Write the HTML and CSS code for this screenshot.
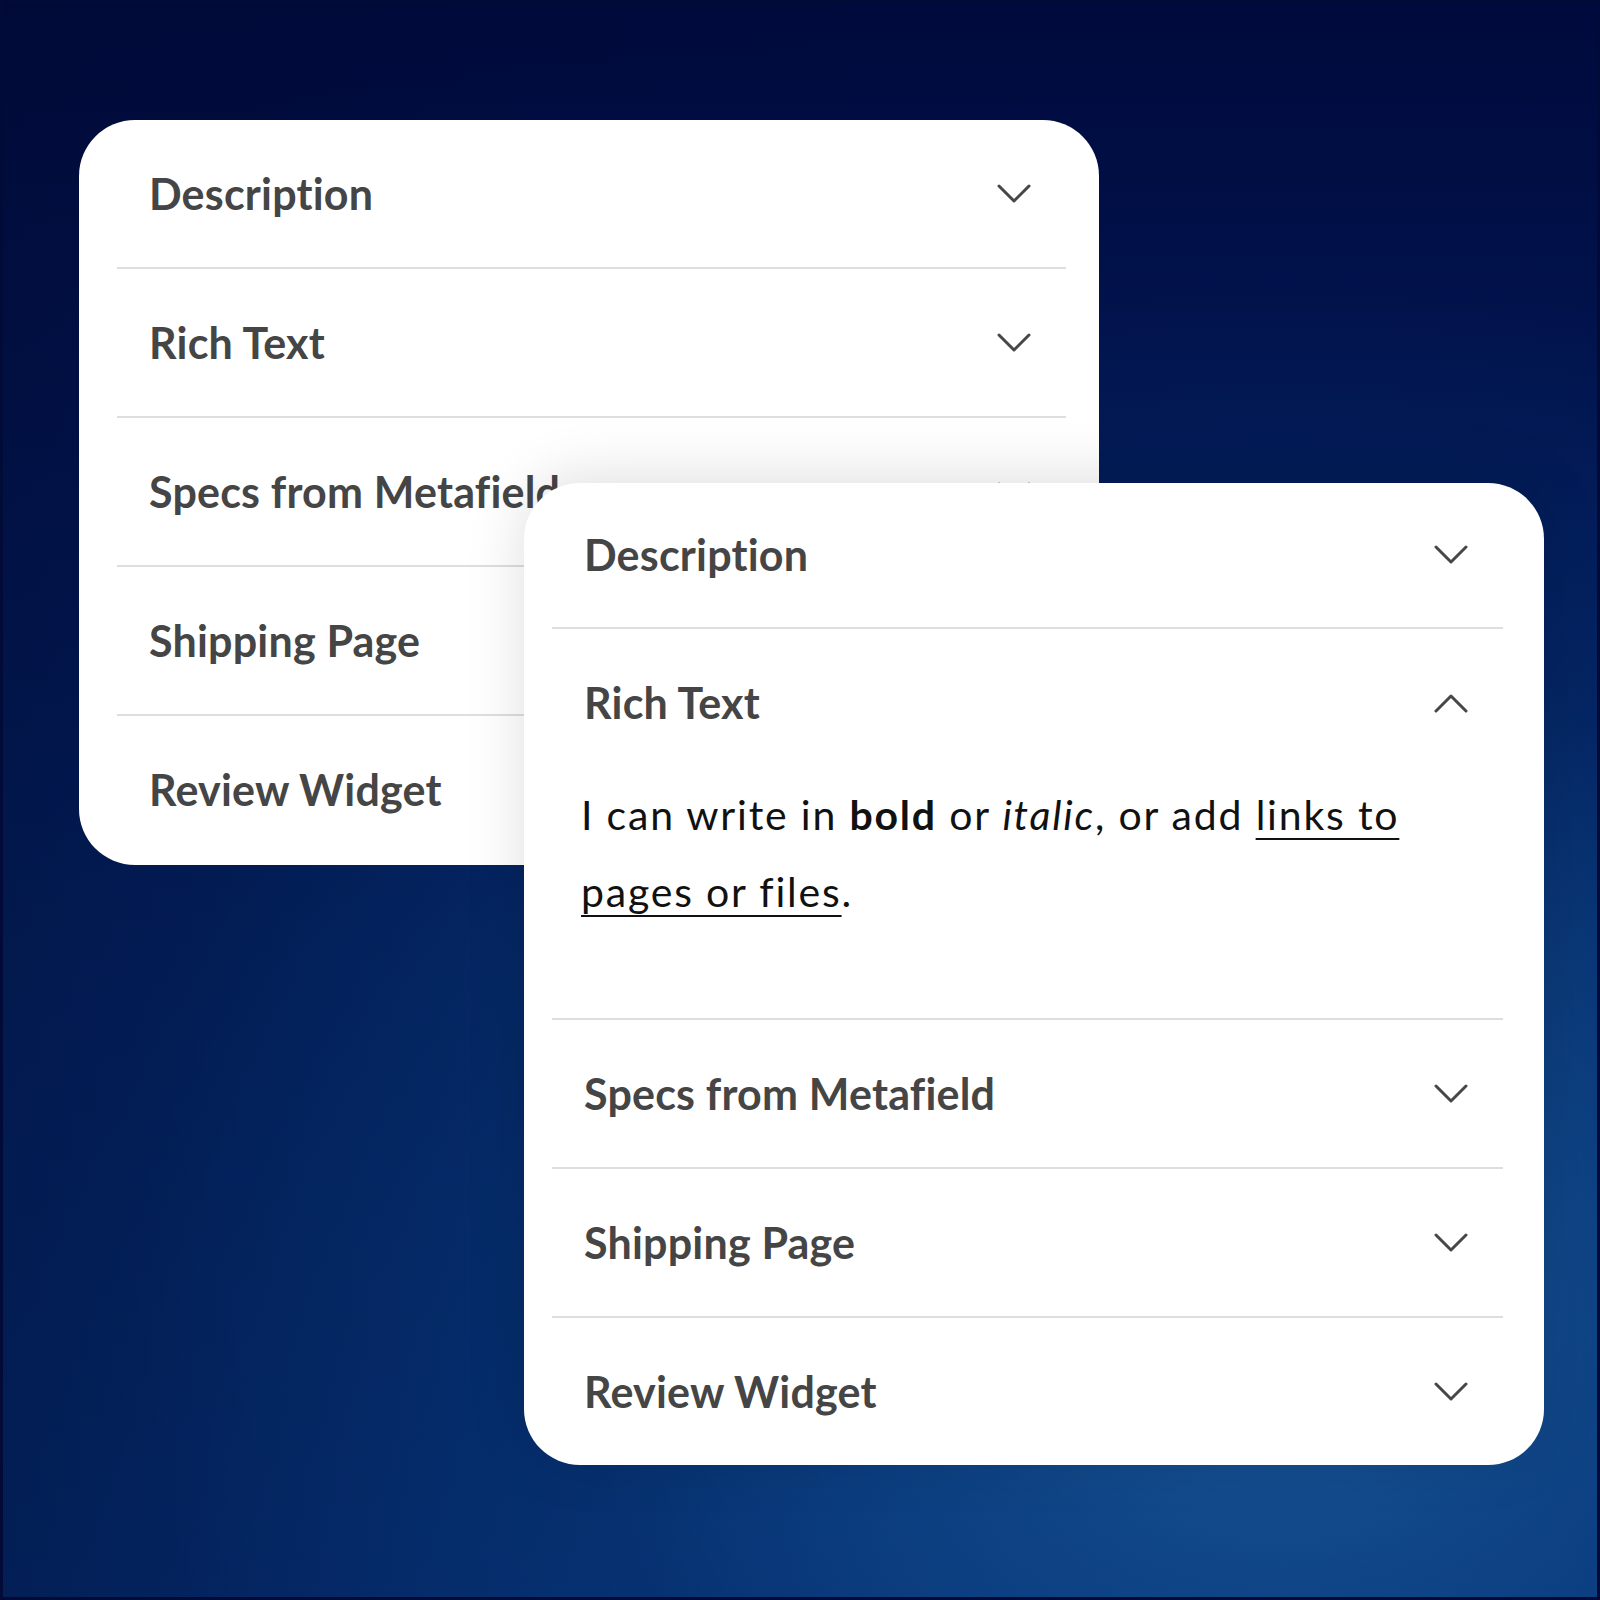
FILE: index.html
```html
<!DOCTYPE html>
<html lang="en">
<head>
<meta charset="utf-8">
<title>Accordion</title>
<link rel="stylesheet" href="styles.css">
</head>
<body>
<div class="stage">
  <section class="card card--back">
    <div class="item"><span class="title">Description</span><svg class="chev" viewBox="0 0 34 20"><polyline points="2,2 17,17 32,2"/></svg></div>
    <div class="item"><span class="title">Rich Text</span><svg class="chev" viewBox="0 0 34 20"><polyline points="2,2 17,17 32,2"/></svg></div>
    <div class="item"><span class="title">Specs from Metafield</span><svg class="chev" viewBox="0 0 34 20"><polyline points="2,2 17,17 32,2"/></svg></div>
    <div class="item"><span class="title">Shipping Page</span><svg class="chev" viewBox="0 0 34 20"><polyline points="2,2 17,17 32,2"/></svg></div>
    <div class="item"><span class="title">Review Widget</span><svg class="chev" viewBox="0 0 34 20"><polyline points="2,2 17,17 32,2"/></svg></div>
  </section>

  <section class="card card--front">
    <div class="item"><span class="title">Description</span><svg class="chev" viewBox="0 0 34 20"><polyline points="2,2 17,17 32,2"/></svg></div>
    <div class="group">
      <div class="item item--open"><span class="title">Rich Text</span><svg class="chev" viewBox="0 0 34 20"><polyline points="2,18 17,3 32,18"/></svg></div>
      <p class="body">I can write in <strong>bold</strong> or <em>italic</em>, or add <a href="#">links to pages or files</a>.</p>
    </div>
    <div class="item"><span class="title">Specs from Metafield</span><svg class="chev" viewBox="0 0 34 20"><polyline points="2,2 17,17 32,2"/></svg></div>
    <div class="item"><span class="title">Shipping Page</span><svg class="chev" viewBox="0 0 34 20"><polyline points="2,2 17,17 32,2"/></svg></div>
    <div class="item"><span class="title">Review Widget</span><svg class="chev" viewBox="0 0 34 20"><polyline points="2,2 17,17 32,2"/></svg></div>
  </section>
</div>
</body>
</html>
```

FILE: styles.css
```css
html, body {
  margin: 0;
  padding: 0;
}

body {
  font-family: Lato, "Liberation Sans", sans-serif;
  background: #000a3a;
}

.stage {
  position: relative;
  width: 1600px;
  height: 1600px;
  box-sizing: border-box;
  border: 3px solid #020a38;
  overflow: hidden;
  background:
    radial-gradient(ellipse 1150px 1050px at 1280px 1300px,
      rgba(30, 96, 162, 0.85) 0%,
      rgba(20, 80, 145, 0.6) 30%,
      rgba(10, 60, 120, 0.28) 62%,
      rgba(10, 60, 120, 0) 100%),
    linear-gradient(90deg,
      rgba(0, 10, 50, 0.45) 0%,
      rgba(0, 10, 50, 0.15) 30%,
      rgba(0, 10, 50, 0) 55%),
    linear-gradient(180deg,
      #000a3c 0%,
      #01114a 18%,
      #021a58 38%,
      #032564 58%,
      #042b6c 78%,
      #053074 100%);
}

.card {
  background: #ffffff;
  border-radius: 56px;
  box-sizing: border-box;
  width: 1020px;
}

.card--back {
  margin: 117px 0 0 76px;
  padding: 0 33px 2px 38px;
}

.card--front {
  position: absolute;
  left: 521px;
  top: 480px;
  padding: 0 41px 0 28px;
  box-shadow: 0 -6px 60px rgba(0, 0, 0, 0.13);
}

.item {
  height: 147px;
  display: flex;
  align-items: center;
  justify-content: space-between;
  padding: 0 35px 0 32px;
  border-bottom: 2px solid #dedede;
}

.card--front > .item:first-child {
  height: 144px;
}

.card > .item:last-child {
  border-bottom: none;
}

.group {
  border-bottom: 2px solid #dedede;
}

.group .item {
  border-bottom: none;
}

.title {
  font-size: 43px;
  line-height: 50px;
  font-weight: 700;
  color: #454545;
  letter-spacing: 0.2px;
}

.chev {
  width: 34px;
  height: 20px;
  flex: none;
  fill: none;
  stroke: #474747;
  stroke-width: 3;
  stroke-linecap: round;
  stroke-linejoin: round;
}

.body {
  margin: 0;
  padding: 0 35px 88px 29px;
  font-size: 41px;
  line-height: 77px;
  letter-spacing: 1.8px;
  color: #111111;
}

.body strong {
  font-weight: 700;
}

.body a {
  color: inherit;
  text-decoration: underline;
  text-decoration-thickness: 2px;
  text-underline-offset: 8px;
}
```
